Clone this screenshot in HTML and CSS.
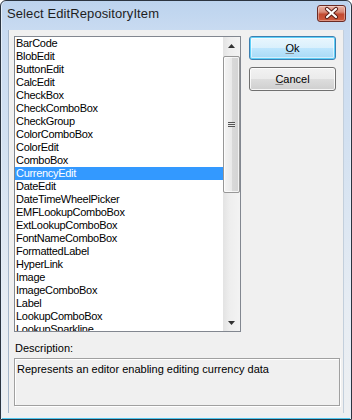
FILE: index.html
```html
<!DOCTYPE html>
<html lang="en">
<head>
    <meta charset="UTF-8">
    <title>Select EditRepositoryItem</title>
    <link rel="stylesheet" href="styles.css">
</head>
<body>

<div class="window">
    <div class="titlebar">
        <span class="title">Select EditRepositoryItem</span>
        <div class="close-btn">
            <svg width="29" height="17" viewBox="0 0 29 17">
                <path d="M10 4 L19 12 M19 4 L10 12" stroke="#5a1f19" stroke-width="4.2" stroke-linecap="round"/>
                <path d="M10 4 L19 12 M19 4 L10 12" stroke="#ffffff" stroke-width="2.2" stroke-linecap="round"/>
            </svg>
        </div>
    </div>

    <div class="client">
        <div class="top-row">
            <div class="listbox">
                <ul class="items">
                    <li>BarCode</li>
                    <li>BlobEdit</li>
                    <li>ButtonEdit</li>
                    <li>CalcEdit</li>
                    <li>CheckBox</li>
                    <li>CheckComboBox</li>
                    <li>CheckGroup</li>
                    <li>ColorComboBox</li>
                    <li>ColorEdit</li>
                    <li>ComboBox</li>
                    <li class="selected">CurrencyEdit</li>
                    <li>DateEdit</li>
                    <li>DateTimeWheelPicker</li>
                    <li>EMFLookupComboBox</li>
                    <li>ExtLookupComboBox</li>
                    <li>FontNameComboBox</li>
                    <li>FormattedLabel</li>
                    <li>HyperLink</li>
                    <li>Image</li>
                    <li>ImageComboBox</li>
                    <li>Label</li>
                    <li>LookupComboBox</li>
                    <li>LookupSparkline</li>
                </ul>
                <div class="vscroll">
                    <div class="arrow">
                        <svg width="7" height="4" viewBox="0 0 7 4"><path d="M0 4 L3.5 0 L7 4 Z" fill="#333"/></svg>
                    </div>
                    <div class="track">
                        <div class="thumb">
                            <div class="grip"></div>
                        </div>
                    </div>
                    <div class="arrow">
                        <svg width="7" height="4" viewBox="0 0 7 4"><path d="M0 0 L7 0 L3.5 4 Z" fill="#333"/></svg>
                    </div>
                </div>
            </div>

            <div class="buttons">
                <button class="btn btn-default"><u>O</u>k</button>
                <button class="btn"><u>C</u>ancel</button>
            </div>
        </div>

        <div class="desc-label">Description:</div>
        <div class="desc-box">Represents an editor enabling editing currency data</div>
    </div>
</div>

</body>
</html>
```

FILE: styles.css
```css
body {
    margin: 0;
    padding: 0;
    font-family: "Liberation Sans", Arial, sans-serif;
    font-size: 11px;
    color: #000;
}

.window {
    width: 352px;
    height: 420px;
    box-sizing: border-box;
    border: 1px solid #2b3440;
    border-radius: 6px 6px 0 0;
    background: linear-gradient(#bcd3ee 0, #c9dbf1 30px, #d3e1f1 140px, #e6ecf3 300px, #eef0f2 420px);
    box-shadow: inset 1px 0 0 #e4eef9, inset -1px 0 0 #e4eef9, inset 0 -1px 0 #4fc6ee;
    display: flex;
    flex-direction: column;
    overflow: hidden;
}

.titlebar {
    height: 29px;
    display: flex;
    align-items: flex-start;
    justify-content: space-between;
    padding: 0 5px 0 6px;
}

.title {
    font-size: 13px;
    letter-spacing: 0.1px;
    color: #1e1e1e;
    margin-top: 5px;
}

.close-btn {
    width: 29px;
    height: 17px;
    margin-top: 4px;
    box-sizing: border-box;
    border: 1px solid #6b2b25;
    border-radius: 3px;
    background: linear-gradient(#eab3a6 0, #d98a77 40%, #c24a31 55%, #cf5a3e 100%);
    box-shadow: inset 0 0 0 1px rgba(255, 255, 255, 0.35);
    display: flex;
    align-items: center;
    justify-content: center;
    overflow: hidden;
}

.close-btn svg {
    display: block;
    margin: -1px;
}

.client {
    flex: 1;
    margin: 0 7px 6px 7px;
    padding: 6px 0 0 5px;
    background: #f0f0f0;
    border-left: 1px solid #a5b6c9;
    border-right: 1px solid #c3cfdc;
}

.top-row {
    display: flex;
    gap: 8px;
}

.listbox {
    width: 227px;
    height: 296px;
    box-sizing: border-box;
    border: 1px solid #828790;
    background: #fff;
    display: flex;
}

.items {
    list-style: none;
    margin: 0;
    padding: 0;
    flex: 1;
    overflow: hidden;
}

.items li {
    height: 13px;
    line-height: 13px;
    padding-left: 1px;
    letter-spacing: -0.3px;
    white-space: nowrap;
}

.items li.selected {
    background: #3399ff;
    color: #fff;
}

.vscroll {
    width: 17px;
    display: flex;
    flex-direction: column;
    background: linear-gradient(to right, #e3e3e3, #eeeeee 40%, #f3f3f3);
}

.arrow {
    height: 17px;
    display: flex;
    align-items: center;
    justify-content: center;
}

.arrow svg {
    display: block;
}

.track {
    flex: 1;
    padding: 2px 0 0 0;
}

.thumb {
    height: 137px;
    box-sizing: border-box;
    border: 1px solid #979797;
    border-radius: 2px;
    background: linear-gradient(to right, #f4f4f4, #eaeaea 50%, #d9d9d9 51%, #d4d4d4);
    box-shadow: inset 0 0 0 1px rgba(255, 255, 255, 0.7);
    display: flex;
    align-items: center;
    justify-content: center;
}

.grip {
    width: 7px;
    height: 5px;
    background: repeating-linear-gradient(#545454 0, #545454 1px, #e8e8e8 1px, #e8e8e8 2px);
}

.buttons {
    display: flex;
    flex-direction: column;
    gap: 7px;
}

.btn {
    width: 87px;
    height: 24px;
    padding: 0;
    font-family: "Liberation Sans", Arial, sans-serif;
    font-size: 11px;
    color: #000;
    border: 1px solid #707070;
    border-radius: 3px;
    background: linear-gradient(#f2f2f2 0, #ebebeb 50%, #dddddd 51%, #cfcfcf 100%);
    box-shadow: inset 0 0 0 1px rgba(255, 255, 255, 0.8);
}

.btn-default {
    border-color: #3c7fb1;
    background: linear-gradient(#eaf6fd 0, #d9f0fc 50%, #bee6fd 51%, #a7d9f5 100%);
    box-shadow: inset 0 0 0 1px #5fd0f8, inset 0 0 0 2px rgba(255, 255, 255, 0.5);
}

.btn u {
    text-decoration-color: #888;
}

.desc-label {
    margin-top: 10px;
    height: 13px;
    line-height: 13px;
    padding-left: 1px;
}

.desc-box {
    margin-top: 3px;
    width: 326px;
    height: 48px;
    box-sizing: border-box;
    border: 1px solid #a0a0a0;
    box-shadow: 1px 1px 0 #fff, inset 1px 1px 0 #fff;
    padding: 4px 2px;
    line-height: 13px;
}
```
